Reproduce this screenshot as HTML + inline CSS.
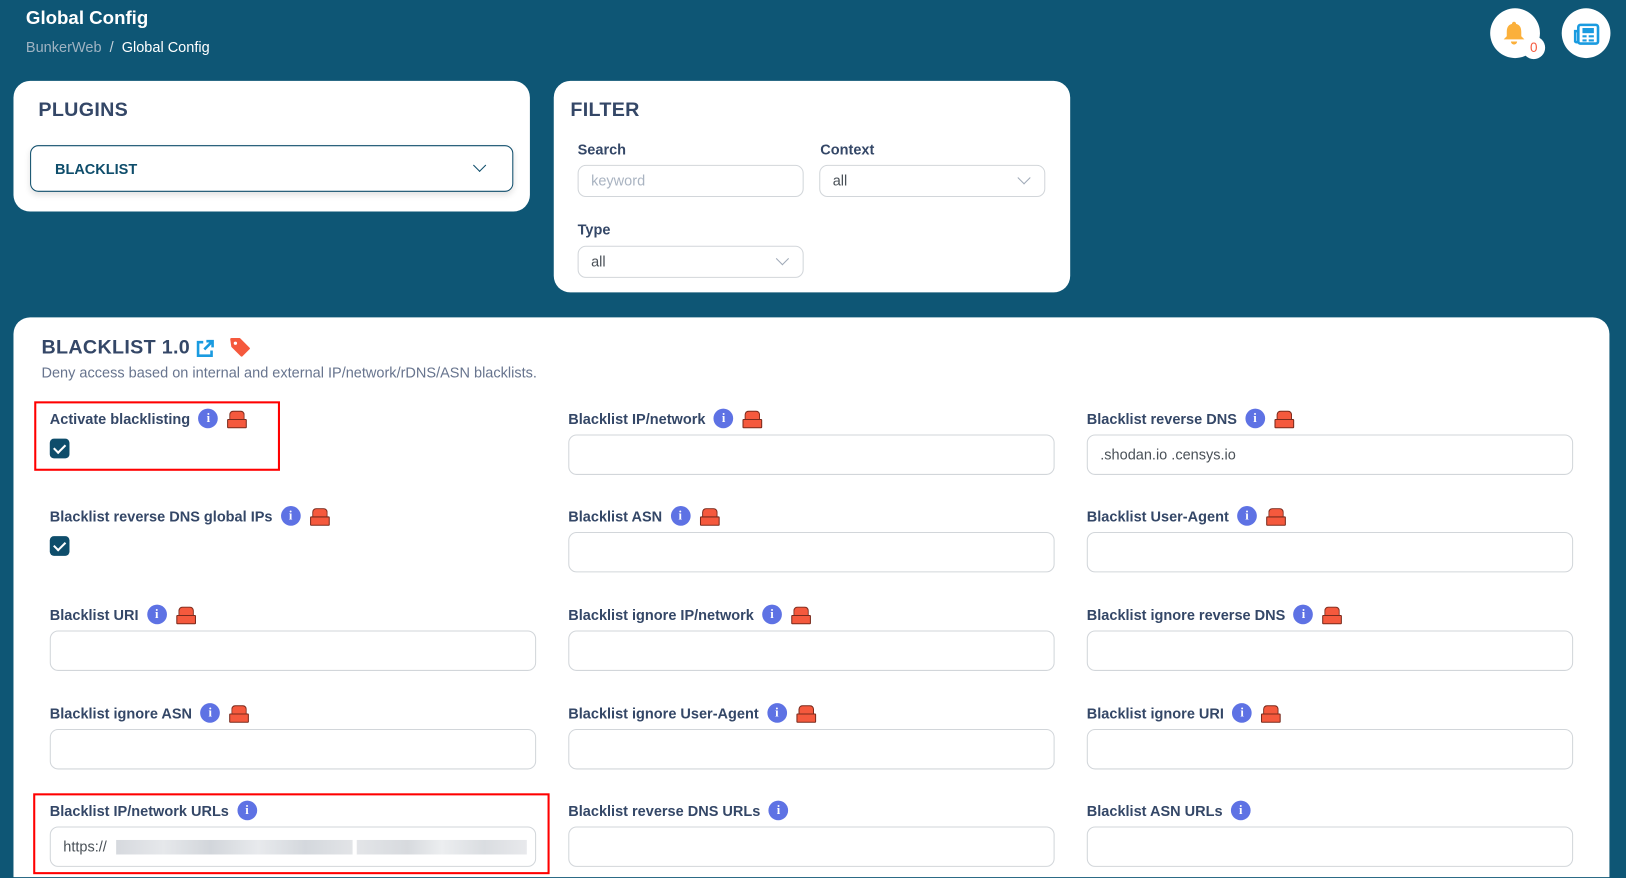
<!DOCTYPE html>
<html><head><meta charset="utf-8"><style>
*{box-sizing:border-box;margin:0;padding:0}
html,body{width:1626px;height:878px;overflow:hidden;background:#0e5675;font-family:"Liberation Sans",sans-serif}
#o{position:absolute;left:0;top:0;width:1626px;height:878px;overflow:hidden}
#w{position:absolute;left:0;top:0;width:1568px;height:846px;overflow:hidden;transform:scale(1.037);transform-origin:0 0}
.a{position:absolute}
.card{position:absolute;background:#fff;border-radius:16px}
.h{color:#344767;font-weight:bold;font-size:19px;letter-spacing:.3px}
.lbl{position:absolute;color:#344767;font-weight:bold;font-size:14px;white-space:nowrap;display:flex;align-items:center}
.inp{position:absolute;width:469px;height:39px;border:1px solid #d2d6da;border-radius:8px;background:#fff;font-size:14px;color:#495057;padding:0 12px;line-height:37px}
.i{display:inline-block;width:19px;height:19px;border-radius:50%;background:#5e72e4;color:#fff;font-size:12px;font-weight:bold;text-align:center;line-height:19px;margin-left:8px;font-family:"Liberation Serif",serif}
.d{display:inline-block;width:19px;height:15px;margin-left:9px;position:relative}
.d:before{content:"";position:absolute;left:2px;right:2px;top:0;height:8px;background:#f5593d;border-radius:4px 4px 0 0;border:1px solid #7a2a1c;border-bottom:none}
.d:after{content:"";position:absolute;left:0;right:0;top:8px;height:7px;background:#f5593d;border:1px solid #7a2a1c;border-radius:1px}
.cb{position:absolute;width:19px;height:19px;background:#0e4d6b;border-radius:4px}
.cb:after{content:"";position:absolute;left:6px;top:3px;width:5px;height:9px;border:solid #fff;border-width:0 2px 2px 0;transform:rotate(45deg)}
.sel{position:absolute;height:31px;border:1px solid #d2d6da;border-radius:8px;font-size:14px;color:#495057;padding:0 12px;line-height:29px}
.chev{position:absolute;width:9px;height:9px;border:solid #a0aab8;border-width:0 1.5px 1.5px 0;transform:rotate(45deg)}
.red{position:absolute;border:2px solid #f00}
</style></head><body><div id="o"><div id="w">
<div class="a" style="left:25px;top:7px;color:#fff;font-weight:bold;font-size:18px">Global Config</div>
<div class="a" style="left:25px;top:37px;font-size:14px;color:#c7d3dc"><span style="color:#9fb3c2">BunkerWeb</span>&nbsp; / &nbsp;<span style="color:#fff">Global Config</span></div>
<div class="a" style="left:1437px;top:8px;width:48px;height:48px;border-radius:50%;background:#fff"></div>
<svg class="a" style="left:1449px;top:20px" width="22" height="24" viewBox="0 0 22 24"><path d="M11 1a2 2 0 0 1 2 2c4 1 5 4 5 8v4l3 3H1l3-3v-4c0-4 1-7 5-8a2 2 0 0 1 2-2z" fill="#fbb03b"/><path d="M8 20h6a3 3 0 0 1-6 0z" fill="#fbb03b"/></svg>
<div class="a" style="left:1468px;top:35px;width:22px;height:22px;border-radius:50%;background:#fff;color:#f5593d;font-size:13px;text-align:center;line-height:22px">0</div>
<div class="a" style="left:1506px;top:8px;width:47px;height:48px;border-radius:50%;background:#fff"></div>
<svg class="a" style="left:1517px;top:22px" width="26" height="22" viewBox="0 0 26 22"><rect x="5" y="2" width="19" height="18" rx="2" fill="none" stroke="#1a9be0" stroke-width="2.5"/><path d="M5 8H2v10a2 2 0 0 0 3 0" fill="none" stroke="#1a9be0" stroke-width="2.5"/><rect x="9" y="5" width="11" height="5" fill="#1a9be0"/><path d="M9 13h4M15 13h5M9 17h4M15 17h5" stroke="#1a9be0" stroke-width="2"/></svg>

<div class="card" style="left:13px;top:78px;width:498px;height:126px"></div>
<div class="a h" style="left:37px;top:96px">PLUGINS</div>
<div class="a" style="left:29px;top:140px;width:466px;height:45px;border:1px solid #0e4d6b;border-radius:8px;box-shadow:0 3px 6px rgba(0,0,0,.12)"></div>
<div class="a" style="left:53px;top:155px;font-size:14px;font-weight:bold;color:#0e4d6b">BLACKLIST</div>
<div class="chev" style="left:458px;top:155px;border-color:#0e4d6b"></div>

<div class="card" style="left:534px;top:78px;width:498px;height:204px"></div>
<div class="a h" style="left:550px;top:96px">FILTER</div>
<div class="a" style="left:557px;top:136px;font-size:14px;font-weight:bold;color:#344767">Search</div>
<div class="a" style="left:791px;top:136px;font-size:14px;font-weight:bold;color:#344767">Context</div>
<div class="a" style="left:557px;top:213px;font-size:14px;font-weight:bold;color:#344767">Type</div>
<div class="sel" style="left:557px;top:159px;width:218px;color:#a9b3c1">keyword</div>
<div class="sel" style="left:790px;top:159px;width:218px">all</div>
<div class="chev" style="left:983px;top:167px"></div>
<div class="sel" style="left:557px;top:237px;width:218px">all</div>
<div class="chev" style="left:750px;top:245px"></div>

<div class="a" style="left:13px;top:306px;width:1539px;height:540px;background:#fff;border-radius:16px 16px 0 0"></div>
<div class="a h" style="left:40px;top:325px">BLACKLIST 1.0</div>
<svg class="a" style="left:188px;top:327px" width="19" height="19" viewBox="0 0 19 19"><path d="M8 3H3v13h13v-5" fill="none" stroke="#1a9be0" stroke-width="2.5"/><path d="M11 2h6v6M17 2l-8 8" fill="none" stroke="#1a9be0" stroke-width="2.5"/></svg>
<svg class="a" style="left:221px;top:325px" width="21" height="19" viewBox="0 0 21 19"><path d="M2 2h8l9 9-7 7-9-9z" fill="#f5593d" stroke="#f5593d" stroke-linejoin="round" stroke-width="2"/><circle cx="6" cy="6" r="1.6" fill="#fff"/></svg>
<div class="a" style="left:40px;top:351px;font-size:14px;color:#67748e">Deny access based on internal and external IP/network/rDNS/ASN blacklists.</div>

<div class="red" style="left:33px;top:387px;width:237px;height:67px"></div>
<div class="lbl" style="left:48px;top:394px">Activate blacklisting<span class="i">i</span><span class="d"></span></div>
<div class="cb" style="left:48px;top:423px"></div>
<div class="lbl" style="left:548px;top:394px">Blacklist IP/network<span class="i">i</span><span class="d"></span></div>
<div class="inp" style="left:548px;top:419px"></div>
<div class="lbl" style="left:1048px;top:394px">Blacklist reverse DNS<span class="i">i</span><span class="d"></span></div>
<div class="inp" style="left:1048px;top:419px">.shodan.io .censys.io</div>

<div class="lbl" style="left:48px;top:488px">Blacklist reverse DNS global IPs<span class="i">i</span><span class="d"></span></div>
<div class="cb" style="left:48px;top:517px"></div>
<div class="lbl" style="left:548px;top:488px">Blacklist ASN<span class="i">i</span><span class="d"></span></div>
<div class="inp" style="left:548px;top:513px"></div>
<div class="lbl" style="left:1048px;top:488px">Blacklist User-Agent<span class="i">i</span><span class="d"></span></div>
<div class="inp" style="left:1048px;top:513px"></div>

<div class="lbl" style="left:48px;top:583px">Blacklist URI<span class="i">i</span><span class="d"></span></div>
<div class="inp" style="left:48px;top:608px"></div>
<div class="lbl" style="left:548px;top:583px">Blacklist ignore IP/network<span class="i">i</span><span class="d"></span></div>
<div class="inp" style="left:548px;top:608px"></div>
<div class="lbl" style="left:1048px;top:583px">Blacklist ignore reverse DNS<span class="i">i</span><span class="d"></span></div>
<div class="inp" style="left:1048px;top:608px"></div>

<div class="lbl" style="left:48px;top:678px">Blacklist ignore ASN<span class="i">i</span><span class="d"></span></div>
<div class="inp" style="left:48px;top:703px"></div>
<div class="lbl" style="left:548px;top:678px">Blacklist ignore User-Agent<span class="i">i</span><span class="d"></span></div>
<div class="inp" style="left:548px;top:703px"></div>
<div class="lbl" style="left:1048px;top:678px">Blacklist ignore URI<span class="i">i</span><span class="d"></span></div>
<div class="inp" style="left:1048px;top:703px"></div>

<div class="red" style="left:32px;top:765px;width:498px;height:78px"></div>
<div class="lbl" style="left:48px;top:772px">Blacklist IP/network URLs<span class="i">i</span></div>
<div class="inp" style="left:48px;top:797px">https://</div>
<div class="a" style="left:112px;top:810px;width:228px;height:14px;background:linear-gradient(90deg,#d6d9de,#e6e8eb 20%,#d2d6db 40%,#e8eaed 60%,#d4d8dd 80%,#e2e4e7)"></div>
<div class="a" style="left:344px;top:810px;width:164px;height:14px;background:linear-gradient(90deg,#e3e5e8,#d7dade 30%,#eceef0 50%,#dadde1 75%,#e8e9ec)"></div>
<div class="lbl" style="left:548px;top:772px">Blacklist reverse DNS URLs<span class="i">i</span></div>
<div class="inp" style="left:548px;top:797px"></div>
<div class="lbl" style="left:1048px;top:772px">Blacklist ASN URLs<span class="i">i</span></div>
<div class="inp" style="left:1048px;top:797px"></div>
</div></div></body></html>
